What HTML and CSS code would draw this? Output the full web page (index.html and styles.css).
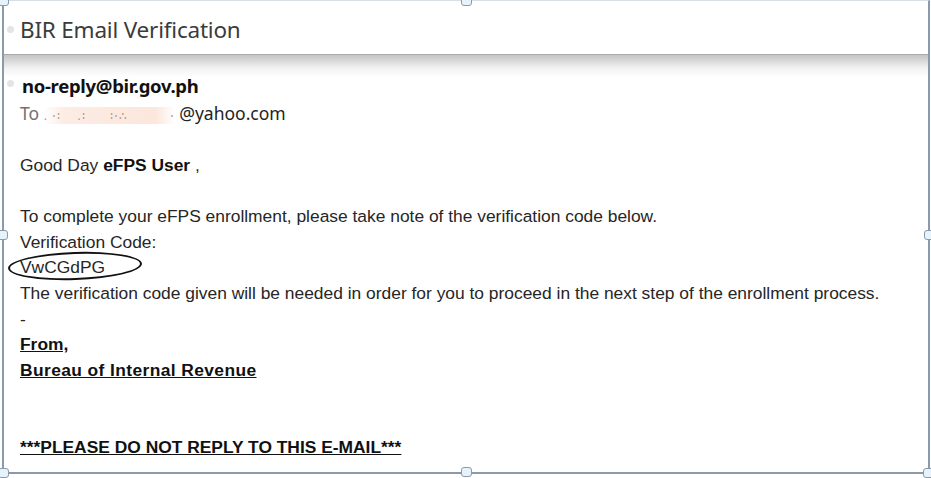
FILE: index.html
```html
<!DOCTYPE html>
<html>
<head>
<meta charset="utf-8">
<link rel="stylesheet" href="styles.css">
</head>
<body>
<div class="frame">
  <span class="handle h-tl"></span>
  <span class="handle h-tm"></span>
  <span class="handle h-ml"></span>
  <span class="handle h-mr"></span>
  <span class="handle h-bl"></span>
  <span class="handle h-bm"></span>
  <span class="handle h-br"></span>

  <div class="header">
    <span class="dot"></span>
    <h1 class="title">BIR Email Verification</h1>
  </div>
  <div class="shade"></div>

  <div class="meta">
    <div class="sender"><span class="dot dot-s"></span>no-reply@bir.gov.ph</div>
    <div class="to">To <span class="redact">.&nbsp;&#8901;&#8758;&nbsp;&nbsp;&nbsp;&nbsp;.&#8758;&nbsp;&nbsp;&nbsp;&nbsp;&nbsp;&nbsp;&#8758;&#8901;&#8756;&nbsp;&nbsp;&nbsp;&nbsp;&nbsp;&nbsp;&nbsp;&nbsp;&nbsp;&nbsp;&#8901;</span> <span class="addr">@yahoo.com</span></div>
  </div>

  <div class="body">
    <p>Good Day <b>eFPS User</b> ,</p>
    <p>&nbsp;</p>
    <p>To complete your eFPS enrollment, please take note of the verification code below.</p>
    <p>Verification Code:</p>
    <p class="code-line"><span class="code">VwCGdPG</span></p>
    <p>The verification code given will be needed in order for you to proceed in the next step of the enrollment process.</p>
    <p>-</p>
    <p class="sig">From,</p>
    <p class="sig sig-wide">Bureau of Internal Revenue</p>
    <p>&nbsp;</p>
    <p>&nbsp;</p>
    <p class="sig">***PLEASE DO NOT REPLY TO THIS E-MAIL***</p>
  </div>
</div>
</body>
</html>
```

FILE: styles.css
```css
html, body {
  margin: 0;
  padding: 0;
  background: #ffffff;
}
body {
  width: 931px;
  height: 478px;
  overflow: hidden;
}
.frame {
  position: relative;
  margin: 0 1px 0 2px;
  height: 474px;
  border-left: 2px solid #8a9aab;
  border-right: 2px solid #8a9aab;
  border-bottom: 2px solid #8a9aab;
  border-top: 1px solid #d6dee6;
  box-sizing: border-box;
  background: #fff;
}
.handle {
  position: absolute;
  width: 9px;
  height: 8px;
  border: 1px solid #8a9aab;
  border-radius: 3px;
  background: #e6f3fb;
}
.h-tl { left: -6px; top: -5px; }
.h-tm { left: 457px; top: -5px; }
.h-ml { left: -7px; top: 229px; }
.h-mr { right: -7px; top: 229px; }
.h-bl { left: -6px; bottom: -6px; }
.h-bm { left: 457px; bottom: -5px; }
.h-br { right: -6px; bottom: -6px; }

.header {
  height: 53px;
  display: flex;
  align-items: center;
  padding-left: 16px;
  border-bottom: 1px solid #a9a9a9;
  position: relative;
}
.dot {
  position: absolute;
  left: 3px;
  width: 7px;
  height: 7px;
  border-radius: 50%;
  background: #e4e4e4;
}
.header .dot { top: 25px; }
.title {
  margin: 0;
  font-family: "Noto Sans", sans-serif;
  font-weight: 400;
  font-size: 22.5px;
  color: #3b3b3b;
  letter-spacing: -0.2px;
  padding-top: 4px;
}
.shade {
  height: 22px;
  background: linear-gradient(#c4c4c4, #f2f2f2 60%, #ffffff);
}
.meta {
  padding-left: 16px;
  font-family: "Noto Sans", sans-serif;
  position: relative;
}
.sender {
  font-weight: 700;
  font-size: 18.5px;
  letter-spacing: -0.3px;
  color: #111;
  height: 24px;
  line-height: 18px;
  padding-left: 2px;
  position: relative;
}
.dot-s { left: -13px; top: 3px; }
.to {
  color: #707070;
  font-size: 17.5px;
  line-height: 24px;
}
.redact {
  color: #b59a8e;
  background: linear-gradient(90deg, #fff 0%, #fcece4 15%, #fbe7dc 85%, #fff 100%);
  letter-spacing: 1px;
  font-size: 12px;
}
.addr { color: #222; }

.body {
  padding: 25px 0 0 16px;
  font-family: "Liberation Sans", Arial, sans-serif;
  font-size: 17.4px;
  line-height: 25.6px;
  color: #262626;
}
.body p {
  margin: 0;
  white-space: nowrap;
}
.body b { color: #111; }
.sig {
  font-weight: 700;
  text-decoration: underline;
  color: #111;
}
.sig-wide { letter-spacing: 0.4px; }
.code-line { position: relative; }
.code {
  position: relative;
  display: inline-block;
}
.code::after {
  content: "";
  position: absolute;
  left: -12px;
  top: -3px;
  width: 134px;
  height: 28px;
  border: 2.5px solid #111;
  border-radius: 50%;
  box-sizing: border-box;
  transform: rotate(-2deg);
}
```
